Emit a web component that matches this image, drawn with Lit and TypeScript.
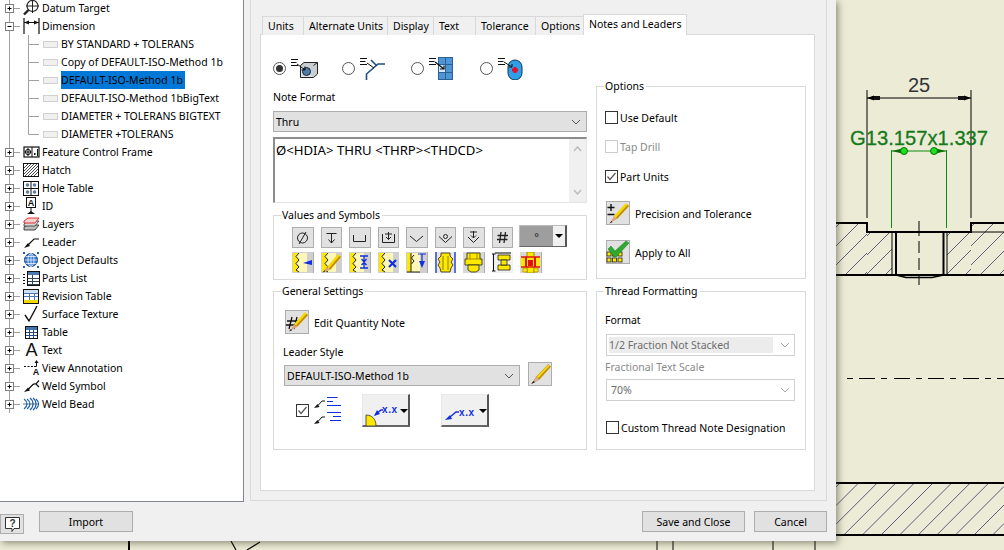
import { LitElement, html, svg, css } from "lit";
import { customElement } from "lit/decorators.js";

const s = (w: number, h: number, inner: unknown) => html`<svg class="ic" width=${w} height=${h} viewBox="0 0 ${w} ${h}">${inner}</svg>`;

const hatchLines = (x0: number, x1: number, y0: number, y1: number, step: number, off = 0) => {
  const out: string[] = [];
  const h = y1 - y0;
  for (let x = x0 + off - h; x < x1; x += step) {
    let xa = x, ya = y1, xb = x + h, yb = y0;
    if (xa < x0) { ya -= x0 - xa; xa = x0; }
    if (xb > x1) { yb += xb - x1; xb = x1; }
    if (xa < xb) out.push(`M${xa} ${ya}L${xb} ${yb}`);
  }
  return out.join("");
};

const canvas = html`<svg class="canvas" width="1004" height="550" viewBox="0 0 1004 550">
  <g fill="none" stroke="#000">
    <path d=${hatchLines(836, 867, 223, 275, 19, 4) + hatchLines(867, 892, 232, 275, 19, 4) + hatchLines(947, 971, 232, 275, 19, 4) + hatchLines(971, 1004, 223, 275, 19, 4)} stroke="#20205a" stroke-width=".7"/>
    <path d=${hatchLines(836, 1004, 484, 535, 18.6, 3)} stroke="#20205a" stroke-width=".7"/>
    <path d="M836 223H867V232H971V223H1004M836 275H1004M836 483H1004M836 535H1004M896 232V275M943.5 232V275" stroke-width="2"/>
    <path d="M971 232H1004M892 232V275M947 232V275M867 90V218M971 90V218M867 98H971M657 541V550M673 541V550M773 541V550M815 541V550" stroke-width="1"/>
    <path d="M896 275L906 277.5H932L943.5 275" stroke-width="1.5"/>
    <path d="M919 221V236M919 241V253M919 258V270M919 275V285" stroke-width="1"/>
    <path d="M847 378.5H853M859 378.5H875M881 378.5H887M894 378.5H910M916 378.5H922M928 378.5H944M950 378.5H956M963 378.5H979M985 378.5H991M997 378.5H1004" stroke-width="1"/>
    <path d="M129 541V550" stroke-width="2"/>
    <path d="M231 541L236 550M247 550L260 542" stroke-width="1.2"/>
  </g>
  <path d="M867 98L874 95.5V100.5ZM971 98L964 95.5V100.5Z" fill="#000"/>
  <path d="M874 96H880V100H874ZM958 96H964V100H958Z" fill="#111"/>
  <text x="919" y="92" class="dim">25</text>
  <text x="850" y="145" class="gdim">G13.157x1.337</text>
  <path d="M891.5 150V228M946.5 150V228M891.5 151H946.5" fill="none" stroke="#0f8a0f" stroke-width="1"/>
  <path d="M892 151L902 148.5V153.5ZM946 151L936 148.5V153.5Z" fill="#0a6e0a"/>
  <g fill="#1fe01f" stroke="#0a6e0a" stroke-width="1"><circle cx="904" cy="151" r="3.5"/><circle cx="934" cy="151" r="3.5"/></g>
</svg>`;

const pencil = (w = 24) => html`<svg class="ic" width=${w} height=${w} viewBox="0 0 24 24">
  <path d="M8 15L21 1.5L23.5 4L11 18Z" fill="#f6d900" stroke="#7a5a00" stroke-width=".4"/><path d="M10 16.5L22.6 3L23.5 4L11 18Z" fill="#c58a00"/>
  <path d="M8 15L11 18L3 22.5Z" fill="#e4b48a" stroke="#7a5a00" stroke-width=".3"/><path d="M5 19.5L6.4 21L2.4 23Z" fill="#111"/>
</svg>`;

const threadBase = svg`<rect x="0" y="0" width="21" height="21" fill="#cfcfcf"/><rect x="1" y="1" width="14" height="19" fill="#fff7b8"/>
  <path d="M1 1H7L4 4.5L7 8L4 11.5L7 15L4 18L7 20H1Z" fill="#ffe800"/><path d="M7 1L4 4.5L7 8L4 11.5L7 15L4 18L7 20" fill="none" stroke="#222" stroke-width="1"/>`;

const sym = [
  html`<svg class="ic" width="19" height="19" viewBox="0 0 19 19"><circle cx="9.5" cy="10" r="5" fill="none" stroke="#222"/><path d="M6 16L13 4" stroke="#222"/></svg>`,
  html`<svg class="ic" width="19" height="19" viewBox="0 0 19 19"><path d="M4.5 5.5H14.5M9.5 5V15M6.5 11.5L9.5 15L12.5 11.5" fill="none" stroke="#222"/></svg>`,
  html`<svg class="ic" width="19" height="19" viewBox="0 0 19 19"><path d="M3.5 7V13.5H15.5V7" fill="none" stroke="#222"/></svg>`,
  html`<svg class="ic" width="19" height="19" viewBox="0 0 19 19"><path d="M3.5 6V14.5H15.5V6M9.5 4V11.5M7 9L9.5 11.5L12 9M6 6H13" fill="none" stroke="#222"/></svg>`,
  html`<svg class="ic" width="19" height="19" viewBox="0 0 19 19"><path d="M3 8L9.5 13.5L16 8" fill="none" stroke="#222"/></svg>`,
  html`<svg class="ic" width="19" height="19" viewBox="0 0 19 19"><path d="M3 8.5L9.5 14.5L16 8.5" fill="none" stroke="#222"/><circle cx="9.5" cy="8.5" r="2" fill="none" stroke="#222"/></svg>`,
  html`<svg class="ic" width="19" height="19" viewBox="0 0 19 19"><path d="M4 9L9.5 14.5L15 9M9.5 3V10M7 7.5L9.5 10L12 7.5M6 4H13" fill="none" stroke="#222"/></svg>`,
  html`<svg class="ic" width="19" height="19" viewBox="0 0 19 19"><path d="M8 4L6.5 15M12.5 4L11 15M4.5 7.5H15M4 11.5H14.5" fill="none" stroke="#222" stroke-width="1.3"/></svg>`,
];

const thr = (inner: unknown) => html`<svg class="ic" width="21" height="21" viewBox="0 0 21 21">${inner}</svg>`;
const boltFill = "#ffe800";
const sym2 = [
  thr(svg`${threadBase}<path d="M20 8L11 11L20 13Z" fill="#1030e0"/>`),
  thr(svg`${threadBase}<path d="M6 15L17 2L20 5L9 18Z" fill="#f6d900"/><path d="M8 16.5L18.5 4L20 5L9 18Z" fill="#c58a00"/><path d="M6 15L9 18L2 20Z" fill="#d9a67c"/><path d="M3.5 18.2L4.5 19.3L1.5 20.5Z" fill="#111"/>`),
  thr(svg`${threadBase}<path d="M11 4H19M15 4V9M12.5 7L15 10L17.5 7M11 16H19M15 16V11M12.5 13L15 10.5L17.5 13" stroke="#1030e0" fill="none" stroke-width="1.3"/>`),
  thr(svg`${threadBase}<path d="M11 8L18 15M18 8L11 15" stroke="#1030e0" stroke-width="2.2"/>`),
  thr(svg`<rect width="21" height="21" fill="#cfcfcf"/><rect x="1" y="1" width="13" height="19" fill="#fff7b8"/><path d="M1 1H5V20H1Z" fill="#ffe800"/><path d="M5 1V20M8 3L5.5 6L8 9L5.5 12M1 20H14" stroke="#222" fill="none"/><path d="M12 2H20M16 2V14" stroke="#1030e0" stroke-width="1.2" fill="none"/><path d="M13 9L16 16L19 9Z" fill="#1030e0"/>`),
  thr(svg`<rect width="21" height="21" fill="#e8e8e8"/><path d="M1 0V21M20 0V21" stroke="#1030e0" stroke-width="1.3"/><path d="M6 1H15V4L18 7L16 10L18 13L16 16L15 20H6L5 16L3 13L5 10L3 7L6 4Z" fill=${boltFill} stroke="#222" stroke-width=".8"/><path d="M8 4V18M13 4V18" stroke="#8a7a00"/>`),
  thr(svg`<rect width="21" height="21" fill="#d8d8d8"/><path d="M4 1H17V7H19V13H2V7H4Z" fill=${boltFill} stroke="#222" stroke-width=".8"/><path d="M5 13H16V18L13 20H8L5 18Z" fill=${boltFill} stroke="#222" stroke-width=".8"/><path d="M2 7H19M7 1V7M14 1V7" stroke="#8a7a00" stroke-width=".8"/>`),
  thr(svg`<rect width="21" height="21" fill="#f0f0f0"/><path d="M1.5 2V19M0 2H3.5M0 19H3.5M3 1H19" stroke="#111" fill="none"/><path d="M6 3H18V8H6ZM6 13H18V18H6Z" fill=${boltFill} stroke="#222" stroke-width=".8"/><path d="M9 8H15V13H9Z" fill="#ffe800" stroke="#222" stroke-width=".8"/>`),
  thr(svg`<rect width="21" height="21" fill="#d8d8d8"/><path d="M7 0H14V21H7Z" fill=${boltFill} stroke="#8a7a00" stroke-width=".8"/><path d="M1 5H20V15H1Z" fill=${boltFill}/><path d="M5 5H7V15H5ZM14 5H16V15H14Z" fill="#e01010"/><path d="M1 5H20M1 15H20" stroke="#e01010" stroke-width="1.6"/><path d="M8 8H13V14H8Z" fill="#e01010"/><path d="M3 16H7V20H3ZM14 16H18V20H14Z" fill=${boltFill} stroke="#8a7a00" stroke-width=".6"/>`),
];

const noteLines = svg`<path d="M0 1.5H7M0 4.5H5.5M0 7.5H7" stroke="#111" stroke-width="1" fill="none"/>`;
const radioIcons = [
  s(27, 20, svg`${noteLines}<path d="M9.5 7.5H22.5V19.5H9.5Z" fill="#dfe3e6" stroke="#222"/><path d="M9.5 7.5L13 4.5H26.5V16L22.5 19.5M22.5 7.5L26.5 4.5" fill="#c9ced2" stroke="#222"/><circle cx="15.5" cy="13.5" r="4" fill="#4a7ea8" stroke="#223"/><path d="M6 6L14 12M10.5 12H14V8.5" stroke="#111" fill="none"/>`),
  s(26, 23, svg`${noteLines}<path d="M6.5 23V17L18 7H25M11 3L17 9" fill="none" stroke="#1c4f87" stroke-width="1.6"/><path d="M7 6L14 11" stroke="#111"/>`),
  s(25, 23, svg`${noteLines}<rect x="9.5" y=".5" width="14" height="22" fill="#4f94d4" stroke="#2a6298"/><rect x="10" y="7" width="7" height="8" fill="#d8e7f4"/><path d="M10 7.5H23M10 15.5H23M16.5 1V22" stroke="#2a6298"/><path d="M6 5L15 12M11 12H15V8.5" fill="none" stroke="#111" stroke-width="1.2"/>`),
  s(25, 23, svg`${noteLines}<rect x="10" y="3" width="14" height="20" rx="7" fill="#2f9fe8" stroke="#12344f"/><path d="M14 11.5H20V14.5H14ZM15.5 10H18.5V16H15.5Z" fill="#e01028"/><path d="M6 5L14 10M11 10H14V7" fill="none" stroke="#111"/>`),
];

const treeIcons: Record<string, unknown> = {
  datum: s(19, 18, svg`<circle cx="9.5" cy="7" r="5.5" fill="#fff" stroke="#222" stroke-width="1.2"/><path d="M9.5 0V14M3 7H16" stroke="#222"/><path d="M5.5 11L1 15.5" stroke="#222" stroke-width="2.4"/>`),
  dim: s(17, 18, svg`<path d="M1 1V17M16 1V17" stroke="#111" stroke-width="1.2"/><path d="M1 5.5H16" stroke="#111"/><path d="M1 5.5L6 3.5V7.5ZM16 5.5L11 3.5V7.5Z" fill="#111"/>`),
  fcf: s(17, 18, svg`<rect x="1" y="4" width="15" height="10" fill="#fff" stroke="#111" stroke-width="1.2"/><path d="M9 4V14" stroke="#111"/><circle cx="5" cy="9" r="2.6" fill="none" stroke="#111"/><path d="M5 5V13M1.5 9H8.5" stroke="#111"/><path d="M11 10H12.5V12H11ZM14 6H15V13H14Z" fill="#111"/>`),
  hatch: s(17, 18, svg`<rect x=".5" y="2.5" width="15" height="13" fill="#fff" stroke="#111"/><path d="M1 7L5 3M1 10L8 3M1 13L11 3M2 15L14 3M5 15L15 5M8 15L15 8M11 15L15 11" stroke="#333" stroke-width=".9"/>`),
  hole: s(17, 18, svg`<rect x=".5" y="2.5" width="15" height="14" fill="#fff" stroke="#111"/><path d="M8 2V16M1 9.5H15" stroke="#111"/><g fill="#5f7f9c"><circle cx="4.5" cy="6" r="1.8"/><circle cx="11.5" cy="6" r="1.8"/><circle cx="4.5" cy="13" r="1.8"/><circle cx="11.5" cy="13" r="1.8"/></g>`),
  id: s(17, 18, svg`<rect x="3.5" y=".5" width="9" height="10" fill="#fff" stroke="#111"/><text x="8" y="8.5" class="tiny">A</text><path d="M8 11V15" stroke="#111"/><path d="M4 17H12L8 14Z" fill="#111"/>`),
  layers: s(17, 18, svg`<path d="M1 12L5 10H16L12 15H1Z" fill="#bdbdbd" stroke="#222" stroke-width=".8"/><path d="M1 9L5 6H16L12 11H1Z" fill="#d8d8d8" stroke="#333" stroke-width=".8"/><path d="M1 6L5 3H16L12 8H1Z" fill="#fbd0d0" stroke="#e02020" stroke-width=".9"/>`),
  leader: s(17, 18, svg`<path d="M1 15L5 10L7 13Z" fill="#111"/><path d="M5 12L11 6H16" fill="none" stroke="#111" stroke-width="1.2"/>`),
  obj: s(17, 18, svg`<circle cx="8" cy="9" r="6.5" fill="#3d7fd0" stroke="#123a70"/><path d="M8 2.5V15.5M1.5 9H14.5M2.5 5.5H13.5M2.5 12.5H13.5" stroke="#fff" stroke-width=".7"/><ellipse cx="8" cy="9" rx="3" ry="6.5" fill="none" stroke="#fff" stroke-width=".7"/><g fill="#1d5fb0"><rect y="1" width="2" height="2"/><rect x="14" y="1" width="2" height="2"/><rect y="15" width="2" height="2"/><rect x="14" y="15" width="2" height="2"/></g>`),
  parts: s(17, 18, svg`<path d="M0 5.5H3M0 8.5H3M0 11.5H3M0 14.5H3" stroke="#111" stroke-dasharray="2 1"/><rect x="4.5" y="2.5" width="12" height="14" fill="#fff" stroke="#111"/><rect x="5" y="3" width="11" height="3" fill="#4a7ab0"/><path d="M5 9.5H16M5 12.5H16M5 15.5H16M9.5 6V16" stroke="#345"/>`),
  rev: s(17, 18, svg`<rect x=".5" y="2.5" width="15" height="14" fill="#fff" stroke="#111"/><rect x="1" y="13" width="14" height="3" fill="#f6d800"/><path d="M1 6.5H15M1 9.5H15M6.5 3V13M11.5 3V13" stroke="#4a7ab0"/><rect x="1" y="3" width="14" height="3" fill="#cfe0f2"/>`),
  surf: s(17, 18, svg`<path d="M2 10L6 16L14 1" fill="none" stroke="#111" stroke-width="1.4"/>`),
  table: s(17, 18, svg`<rect x="2.5" y="3.5" width="12" height="12" fill="#fff" stroke="#111"/><rect x="3" y="4" width="11" height="3" fill="#3f74b0"/><path d="M3 9.5H14M3 12.5H14M6.5 7V15M10.5 7V15" stroke="#274a74"/>`),
  view: s(17, 18, svg`<path d="M1 7.5H3M4.5 7.5H6.5M8 7.5H10M11 7.5H13.5V3" fill="none" stroke="#111"/><path d="M13.5 1L11.5 4H15.5Z" fill="#111"/><text x="13" y="16" class="tiny">A</text>`),
  weld: s(17, 18, svg`<path d="M1 15L5 10.5L7 13.5Z" fill="#111"/><path d="M5 12.5L10 7.5C11 6.5 12 7 13 7L16 3.5M13 7L16 10" fill="none" stroke="#111" stroke-width="1.2"/>`),
  bead: s(17, 18, svg`<path d="M1 4C5 7 5 11 1 14M4 4C8 7 8 11 4 14M7 3C11 6 11 12 7 15M10 3C14 6 14 12 10 15M13 4C16.5 7 16.5 11 13 14" fill="none" stroke="#1f5fa8" stroke-width="1.1"/><path d="M0 9H16" stroke="#0f3a70" stroke-width=".7"/>`),
};
treeIcons.text = html`<span class="bigA">A</span>`;

const gutterParent = (open: boolean) => html`<svg class="ic" width="23" height="18" viewBox="0 0 23 18">
  <path d="M9.5 0V18M13 9.5H20" stroke="#a0a0a0"/>
  <rect x="5.5" y="5.5" width="8" height="8" fill="#fff" stroke="#808080"/>
  <path d=${open ? "M7.5 9.5H11.5" : "M7.5 9.5H11.5M9.5 7.5V11.5"} stroke="#000"/></svg>`;
const gutterChild = (last: boolean) => html`<svg class="ic" width="61" height="18" viewBox="0 0 61 18">
  <path d="M9.5 0V18M28.5 0V${last ? 9.5 : 18}M28.5 9.5H39" stroke="#a0a0a0"/>
  <rect x="43.5" y="6.5" width="14" height="6" fill="#f0f0f0" stroke="#d0d0d0"/></svg>`;

const roots: [string, string, boolean][] = [
  ["Datum Target", "datum", false], ["Dimension", "dim", true], ["Feature Control Frame", "fcf", false], ["Hatch", "hatch", false],
  ["Hole Table", "hole", false], ["ID", "id", false], ["Layers", "layers", false], ["Leader", "leader", false],
  ["Object Defaults", "obj", false], ["Parts List", "parts", false], ["Revision Table", "rev", false], ["Surface Texture", "surf", false],
  ["Table", "table", false], ["Text", "text", false], ["View Annotation", "view", false], ["Weld Symbol", "weld", false], ["Weld Bead", "bead", false],
];
const children = ["BY STANDARD + TOLERANS", "Copy of DEFAULT-ISO-Method 1b", "DEFAULT-ISO-Method 1b", "DEFAULT-ISO-Method 1bBigText", "DIAMETER + TOLERANS BIGTEXT", "DIAMETER +TOLERANS"];
const tabs: [string, number][] = [["Units", 41], ["Alternate Units", 84], ["Display", 46], ["Text", 42], ["Tolerance", 60], ["Options", 48]];

const chev = html`<svg class="chev" width="10" height="6" viewBox="0 0 10 6"><path d="M1 1L5 5L9 1" fill="none" stroke="#555" stroke-width="1"/></svg>`;
const chevD = html`<svg class="chev" width="10" height="6" viewBox="0 0 10 6"><path d="M1 1L5 5L9 1" fill="none" stroke="#aaa" stroke-width="1"/></svg>`;
const check = html`<svg width="11" height="11" viewBox="0 0 11 11"><path d="M1.5 5.5L4 8.5L9.5 2" fill="none" stroke="#555" stroke-width="1.2"/></svg>`;

@customElement("app-root")
export class AppRoot extends LitElement {
  static styles = css`
    :host { display: block; width: 1004px; height: 550px; position: relative; overflow: hidden; background: #ecebd6;
      font-family: "Noto Sans", sans-serif; font-size: 10.5px; color: #000; }
    .canvas { position: absolute; left: 0; top: 0; }
    .canvas text { font-family: "Liberation Sans", sans-serif; }
    .dim { font-size: 20px; fill: #333; text-anchor: middle; }
    .gdim { font-size: 20.2px; fill: #157a1b; stroke: #157a1b; stroke-width: .3px; }
    .tiny { font-family: "Liberation Sans", sans-serif; font-size: 9px; font-weight: 700; text-anchor: middle; fill: #111; }
    .bigA { display: block; width: 17px; text-align: center; font-family: "Liberation Sans", sans-serif; font-size: 18px; line-height: 18px; color: #111; }
    .ic { display: block; flex: none; }
    .dialog { position: absolute; left: 0; top: 0; width: 836px; height: 541px; background: #f0f0f0; box-shadow: 2px 2px 7px rgba(60,60,40,.55);
      display: flex; flex-direction: column; }
    .main { display: flex; height: 501px; gap: 6px; flex: none; }
    .tree { width: 244px; height: 502px; box-sizing: border-box; background: #fff; border-right: 1px solid #828790; border-bottom: 1px solid #828790; overflow: hidden; }
    .rows { margin-top: -1px; }
    .row { display: flex; align-items: center; height: 18px; white-space: nowrap; }
    .row .pic { width: 19px; flex: none; display: flex; }
    .row .lab { line-height: 18px; }
    .row.sel .lab { background: #0078d7; padding-right: 2px; }
    .frame { width: 577px; height: 501px; box-sizing: border-box; border: 1px solid #d9d9d9; border-top: none; padding: 14px 11px 9px 9px; }
    .tabs { display: flex; align-items: flex-end; height: 21px; margin-left: 2px; margin-bottom: -1px; position: relative; z-index: 1; }
    .tab { box-sizing: border-box; height: 19px; border: 1px solid #d9d9d9; border-right: none; border-bottom: none; display: flex; align-items: center; padding-left: 5px; background: #f0f0f0; }
    .tab.on { height: 21px; width: 104px; background: #fff; border-right: 1px solid #d9d9d9; padding-bottom: 2px; }
    .pane { box-sizing: border-box; height: 457px; background: #fff; border: 1px solid #d9d9d9; padding: 20px 0 0 12px; display: flex; gap: 9px; }
    .left { width: 314px; flex: none; display: flex; flex-direction: column; }
    .right { width: 210px; flex: none; display: flex; flex-direction: column; margin-top: 31px; }
    .radios { display: grid; grid-template-columns: repeat(4, 69px); height: 26px; }
    .ritem { display: flex; align-items: center; gap: 5px; }
    .radio { width: 13px; height: 13px; box-sizing: border-box; border: 1px solid #555; border-radius: 50%; background: #fff; display: flex; align-items: center; justify-content: center; flex: none; }
    .radio.on::after { content: ""; width: 7px; height: 7px; border-radius: 50%; background: #333; }
    .lbl { line-height: 14px; height: 14px; white-space: nowrap; }
    .select { box-sizing: border-box; height: 21px; border: 1px solid #adadad; background: #e1e1e1; display: flex; align-items: center; justify-content: space-between; padding: 0 5px 0 2px; }
    .select.dis { background: #fff; border-color: #d0d0d0; color: #6d6d6d; padding: 2px 4px 2px 2px; height: 22px; }
    .select.dis .val { flex: 1; background: #ececec; align-self: stretch; display: flex; align-items: center; margin-right: 7px; padding-left: 0; }
    .select.dis.plain .val { background: none; padding-left: 2px; }
    .select .chev { flex: none; }
    .note { margin-top: 5px; box-sizing: border-box; height: 66px; background: #fff; border: 1px solid #e3e3e3; border-top: 2px solid #8c8c8c; border-left: 2px solid #8c8c8c; display: flex; }
    .note .txt { flex: 1; padding: 3px 1px; font-size: 13.15px; line-height: 16px; }
    .sb { width: 17px; background: #f0f0f0; display: flex; flex-direction: column; justify-content: space-between; align-items: center; padding: 7px 0; flex: none; box-sizing: border-box; }
    .group { box-sizing: border-box; border: 1px solid #d9d9d9; }
    .legend { width: fit-content; height: 14px; line-height: 14px; margin: -8px 0 0 7px; padding: 0 2px 0 1px; background: #fff; white-space: nowrap; }
    .symgrid { display: grid; grid-template-columns: repeat(9, 28.5px); grid-auto-rows: 21px; row-gap: 4px; margin: 5px 0 0 18px; }
    .btn { box-sizing: border-box; background: #e1e1e1; border: 1px solid #adadad; display: flex; align-items: center; justify-content: center; flex: none; padding: 0; }
    .sym { width: 21.5px; height: 21px; }
    .swatch { width: 48px; height: 22px; margin: -2px 0 0 -1px; box-sizing: border-box; display: flex; background: #9e9e9e; border-right: 2px solid #555; border-bottom: 1px solid #666; border-top: 1px solid #bbb; border-left: 1px solid #bbb; }
    .swatch .dg { flex: 1; text-align: center; line-height: 21px; font-size: 11px; color: #222; }
    .swatch .ar { width: 12px; background: #f0f0f0; display: flex; align-items: center; justify-content: center; }
    .tri { width: 0; height: 0; border-left: 4px solid transparent; border-right: 4px solid transparent; border-top: 4px solid #000; }
    .gs { padding-left: 10px; height: 159px; margin-top: 11px; }
    .gs .legend { margin-left: -3px; }
    .iconrow { display: flex; align-items: center; gap: 5px; }
    .iconrow span { margin-top: 2px; }
    .b24 { width: 24px; height: 24px; }
    .lsel { display: flex; align-items: flex-end; gap: 8px; margin-top: 3px; }
    .lsel .select { width: 236px; }
    .ldr { display: flex; align-items: flex-start; margin-top: 8px; }
    .cb { width: 13px; height: 13px; box-sizing: border-box; border: 1px solid #333; background: #fff; display: flex; align-items: center; justify-content: center; flex: none; }
    .cb.dis { border-color: #ccc; }
    .raised { box-sizing: border-box; width: 48px; height: 33px; background: #f0f0f0; border-top: 1px solid #e8e8e8; border-left: 1px solid #e8e8e8; border-right: 2px solid #555; border-bottom: 2px solid #666; flex: none; }
    .optrows { padding-left: 8px; }
    .chk { display: flex; align-items: center; gap: 2px; height: 13px; white-space: nowrap; }
    .grey { color: #8a8a8a; }
    .opts { height: 193px; }
    .o2 { margin-top: 16px; }
    .o3 { margin-top: 17px; }
    .o4 { margin-top: 18px; margin-left: 1px; }
    .o5 { margin-top: 15px; margin-left: 1px; }
    .thread { height: 159px; margin-top: 12px; padding-left: 9px; }
    .thread .legend { margin-left: -2px; }
    .thread .select { width: 189px; }
    .foot { display: flex; align-items: flex-start; padding-top: 10px; }
    .fbtn { box-sizing: border-box; height: 21px; background: #e1e1e1; border: 1px solid #adadad; display: flex; align-items: center; justify-content: center; }
    .help { width: 24px; height: 20px; margin: 3px 15px 0 0; }
    .grow { flex: 1; }
    .xx { font: 700 10px "Liberation Sans", sans-serif; fill: #1030e0; letter-spacing: .6px; }
    .q { font: 700 10px "Liberation Sans", sans-serif; text-anchor: middle; fill: #333; }
  `;

  render() {
    return html`${canvas}
    <div class="dialog">
      <div class="main">
        <div class="tree"><div class="rows">
          ${roots.map(([n, ic, open]) => html`
            <div class="row">${gutterParent(open)}<span class="pic">${treeIcons[ic]}</span><span class="lab">${n}</span></div>
            ${open ? children.map((c, i) => html`<div class="row ${i === 2 ? "sel" : ""}">${gutterChild(i === children.length - 1)}<span class="lab">${c}</span></div>`) : ""}
          `)}
        </div></div>
        <div class="frame">
          <div class="tabs">
            ${tabs.map(([t, w]) => html`<div class="tab" style="width:${w}px">${t}</div>`)}
            <div class="tab on">Notes and Leaders</div>
          </div>
          <div class="pane">
            <div class="left">
              <div class="radios">
                ${radioIcons.map((ic, i) => html`<div class="ritem"><span class="radio ${i === 0 ? "on" : ""}"></span>${ic}</div>`)}
              </div>
              <div class="lbl" style="margin-top:9px">Note Format</div>
              <div class="select" style="margin-top:7px"><span>Thru</span>${chev}</div>
              <div class="note">
                <div class="txt">Ø&lt;HDIA&gt; THRU &lt;THRP&gt;&lt;THDCD&gt;</div>
                <div class="sb">
                  <svg width="9" height="6" viewBox="0 0 9 6"><path d="M1 5L4.5 1L8 5" fill="none" stroke="#bbb" stroke-width="1.4"/></svg>
                  <svg width="9" height="6" viewBox="0 0 9 6"><path d="M1 1L4.5 5L8 1" fill="none" stroke="#bbb" stroke-width="1.4"/></svg>
                </div>
              </div>
              <div class="group" style="margin-top:12px;height:65px">
                <div class="legend">Values and Symbols</div>
                <div class="symgrid">
                  ${sym.map((x) => html`<div class="btn sym">${x}</div>`)}
                  <div class="swatch"><span class="dg">°</span><span class="ar"><span class="tri"></span></span></div>
                  ${sym2.map((x) => html`<div class="btn sym">${x}</div>`)}
                </div>
              </div>
              <div class="group gs">
                <div class="legend">General Settings</div>
                <div class="iconrow" style="margin:12px 0 0 1px">
                  <div class="btn b24"><svg class="ic" width="24" height="24" viewBox="0 0 24 24"><path d="M7 7L4 19M12 7L9 19M2 11H14M1 15H13" fill="none" stroke="#111" stroke-width="1.3"/><path d="M9 14L20 2L23 5L12 17Z" fill="#f6d900"/><path d="M11 15.5L21.5 4L23 5L12 17Z" fill="#c58a00"/><path d="M9 14L12 17L5 21Z" fill="#d9a67c"/><path d="M6 19L7 20.2L4 21.5Z" fill="#111"/></svg></div>
                  <span>Edit Quantity Note</span>
                </div>
                <div class="lbl" style="margin:11px 0 0 -1px">Leader Style</div>
                <div class="lsel">
                  <div class="select"><span>DEFAULT-ISO-Method 1b</span>${chev}</div>
                  <div class="btn b24">${pencil(22)}</div>
                </div>
                <div class="ldr">
                  <div class="cb" style="margin:10px 4px 0 12px">${check}</div>
                  <svg class="ic" width="29" height="29" viewBox="0 0 29 29" style="margin:2px 20px 0 0">
                    <path d="M1 12L4.5 8L6.5 11Z" fill="#111"/><path d="M5 9.5L9 5H12" fill="none" stroke="#111"/>
                    <path d="M1 28L4.5 24L6.5 27Z" fill="#111"/><path d="M5 25.5L9 21H12" fill="none" stroke="#111"/>
                    <path d="M14 1.5H24.5M14 5.5H20M14 9.5H28M14 16.5H28M20 20.5H28M17 24.5H28" stroke="#1030e0" fill="none"/>
                  </svg>
                  <div class="raised"><svg width="46" height="31" viewBox="0 0 46 31">
                    <path d="M3 31V20C9 20 13 24 13 31Z" fill="#ffe800" stroke="#333" stroke-width=".8"/>
                    <path d="M12 20L18 15H20" fill="none" stroke="#1030e0" stroke-width="1.4"/><path d="M11 21L14 15L17 19Z" fill="#1030e0"/>
                    <text x="19" y="18" class="xx">x.x</text>
                    <path d="M37 14H45L41 18Z" fill="#000"/></svg></div>
                  <div class="raised" style="margin-left:31px"><svg width="46" height="31" viewBox="0 0 46 31">
                    <path d="M3 25L8 20L10 24Z" fill="#1030e0"/><path d="M8 22L14 17H17" fill="none" stroke="#1030e0" stroke-width="1.4"/>
                    <text x="17" y="21" class="xx">x.x</text>
                    <path d="M37 14H45L41 18Z" fill="#000"/></svg></div>
                </div>
              </div>
            </div>
            <div class="right">
              <div class="group opts">
                <div class="legend">Options</div>
                <div class="optrows">
                  <div class="chk" style="margin-top:18px"><span class="cb"></span>Use Default</div>
                  <div class="chk o2 grey"><span class="cb dis"></span>Tap Drill</div>
                  <div class="chk o3"><span class="cb">${check}</span>Part Units</div>
                  <div class="iconrow o4"><div class="btn b24"><svg class="ic" width="24" height="24" viewBox="0 0 24 24"><path d="M5 3V10M1.5 6.5H8.5M1.5 13.5H8.5" stroke="#111" stroke-width="1.4"/><path d="M8 15L20 2L23 5L11 18Z" fill="#f6d900"/><path d="M10 16.5L21.5 4L23 5L11 18Z" fill="#c58a00"/><path d="M8 15L11 18L4 22Z" fill="#d9a67c"/><path d="M5.5 20L6.5 21L3.5 22.5Z" fill="#111"/></svg></div><span>Precision and Tolerance</span></div>
                  <div class="iconrow o5"><div class="btn b24"><svg class="ic" width="24" height="24" viewBox="0 0 24 24"><g fill="#ffe800" stroke="#222" stroke-width=".8"><rect x="1" y="12" width="4" height="4"/><rect x="6.5" y="12" width="4" height="4"/><rect x="12" y="12" width="4" height="4"/><rect x="1" y="18" width="4" height="4"/><rect x="6.5" y="18" width="4" height="4"/><rect x="12" y="18" width="4" height="4"/></g><path d="M2 9L5 6L9 11L20 1L23 3L10 17H8Z" fill="#2fa82f" stroke="#1a7a1a" stroke-width=".5"/></svg></div><span>Apply to All</span></div>
                </div>
              </div>
              <div class="group thread">
                <div class="legend">Thread Formatting</div>
                <div class="lbl" style="margin:15px 0 0 -1px">Format</div>
                <div class="select dis" style="margin-top:7px"><span class="val">1/2 Fraction Not Stacked</span>${chevD}</div>
                <div class="lbl grey" style="margin:4px 0 0 -1px">Fractional Text Scale</div>
                <div class="select dis plain" style="margin-top:5px"><span class="val">70%</span>${chevD}</div>
                <div class="chk" style="margin-top:20px"><span class="cb"></span>Custom Thread Note Designation</div>
              </div>
            </div>
          </div>
        </div>
      </div>
      <div class="foot">
        <div class="fbtn help"><svg width="17" height="17" viewBox="0 0 17 17"><path d="M1.5 1.5H15.5V12.5H10L8 15.5V12.5H1.5Z" fill="#fff" stroke="#333"/><text x="8.5" y="10.5" class="q">?</text></svg></div>
        <div class="fbtn" style="width:94px">Import</div>
        <div class="grow"></div>
        <div class="fbtn" style="width:103px">Save and Close</div>
        <div class="fbtn" style="width:73px;margin:0 9px 0 9px">Cancel</div>
      </div>
    </div>`;
  }
}
